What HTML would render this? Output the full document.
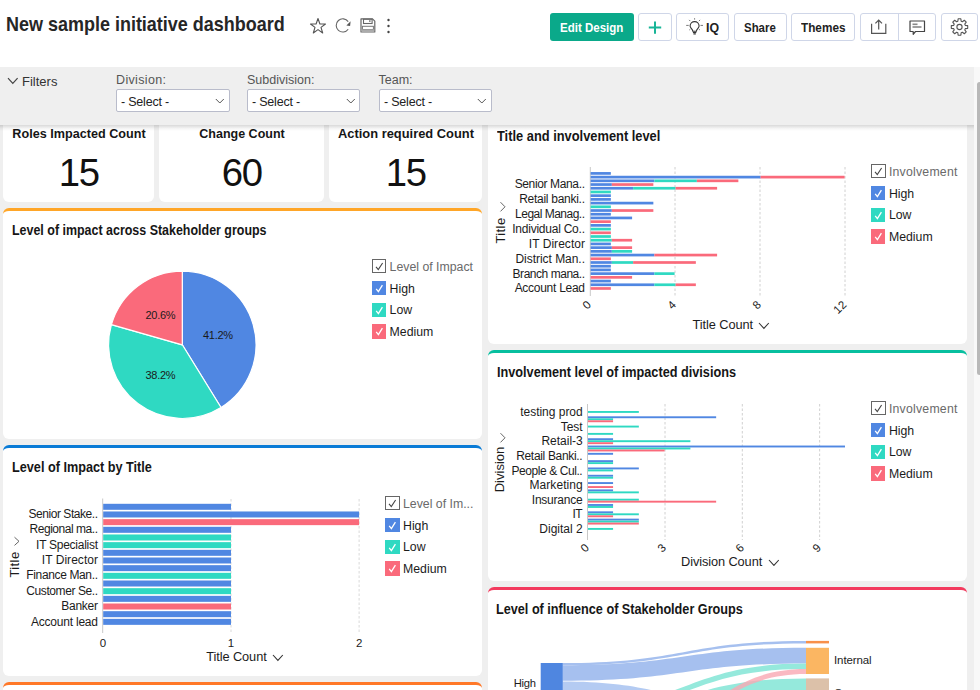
<!DOCTYPE html>
<html><head><meta charset="utf-8">
<style>
*{box-sizing:border-box;margin:0;padding:0}
html,body{width:980px;height:690px;overflow:hidden;background:#fff;font-family:"Liberation Sans",sans-serif;color:#222}
.a{position:absolute}
.t{position:absolute;white-space:nowrap;line-height:1}
#hdr{left:0;top:0;width:980px;height:67px;background:#fff}
#filt{left:0;top:67px;width:975px;height:58px;background:#efefef}
#content{left:0;top:125px;width:975px;height:565px;background:#efefef;overflow:hidden}
#sb{left:974px;top:67px;width:6px;height:623px;background:#f8f8f8}
#sbt{left:977px;top:82px;width:5px;height:293px;background:#b8b8b8;border-radius:3px}
.card{position:absolute;background:#fff;border-radius:6px;overflow:hidden}
.btn{position:absolute;top:13px;height:28px;border:1px solid #cfd6e8;border-radius:3px;background:#fff}
.sel{position:absolute;top:22px;height:22.5px;background:#fff;border:1px solid #b9bccb;border-radius:2px}
.ttl{font-weight:bold;font-size:13px;color:#111}
</style></head><body>
<div class="a" style="left:0;top:125px;width:975px;height:565px;background:#efefef"></div>
<div class="card" style="left:3px;top:113px;width:151px;height:89px;"></div>
<div class="card" style="left:159px;top:113px;width:165px;height:89px;"></div>
<div class="card" style="left:329px;top:113px;width:153px;height:89px;"></div>
<div class="card" style="left:3px;top:208px;width:479px;height:231px;border-top:3px solid #ffa628;"></div>
<div class="card" style="left:3px;top:445px;width:479px;height:231px;border-top:3px solid #0a7bd6;"></div>
<div class="card" style="left:3px;top:682px;width:479px;height:231px;border-top:3px solid #ff7828;"></div>
<div class="card" style="left:488px;top:113px;width:479px;height:231px;"></div>
<div class="card" style="left:488px;top:350px;width:479px;height:231px;border-top:3px solid #07bf9f;"></div>
<div class="card" style="left:488px;top:587px;width:479px;height:231px;border-top:3px solid #f33a5e;"></div>
<div class="t" style="left:-121.5px;width:400px;text-align:center;top:126.97px;font-size:13.5px;color:#161616;font-weight:bold;transform:scaleX(0.935);transform-origin:50% 0;">Roles Impacted Count</div>
<div class="t" style="left:-121.2px;width:400px;text-align:center;top:154.18px;font-size:38.3px;color:#111;letter-spacing:-1.3px;">15</div>
<div class="t" style="left:41.5px;width:400px;text-align:center;top:126.97px;font-size:13.5px;color:#161616;font-weight:bold;transform:scaleX(0.927);transform-origin:50% 0;">Change Count</div>
<div class="t" style="left:41.80000000000001px;width:400px;text-align:center;top:154.18px;font-size:38.3px;color:#111;letter-spacing:-1.3px;">60</div>
<div class="t" style="left:205.5px;width:400px;text-align:center;top:126.97px;font-size:13.5px;color:#161616;font-weight:bold;transform:scaleX(0.954);transform-origin:50% 0;">Action required Count</div>
<div class="t" style="left:205.8px;width:400px;text-align:center;top:154.18px;font-size:38.3px;color:#111;letter-spacing:-1.3px;">15</div>
<div class="t" style="left:12.3px;top:223.15px;font-size:14px;color:#161616;font-weight:bold;transform:scaleX(0.889);transform-origin:0 0;">Level of impact across Stakeholder groups</div>
<div class="t" style="left:11.6px;top:460.15px;font-size:14px;color:#161616;font-weight:bold;transform:scaleX(0.905);transform-origin:0 0;">Level of Impact by Title</div>
<div class="t" style="left:496.7px;top:128.55px;font-size:14px;color:#161616;font-weight:bold;transform:scaleX(0.918);transform-origin:0 0;">Title and involvement level</div>
<div class="t" style="left:496.9px;top:365.45px;font-size:14px;color:#161616;font-weight:bold;transform:scaleX(0.906);transform-origin:0 0;">Involvement level of impacted divisions</div>
<div class="t" style="left:496.3px;top:602.15px;font-size:14px;color:#161616;font-weight:bold;transform:scaleX(0.904);transform-origin:0 0;">Level of influence of Stakeholder Groups</div>
<svg class="a" style="left:0;top:0" width="490" height="690"><path d="M182.3 344.8 L182.30 271.10 A73.7 73.7 0 0 1 221.01 407.52 Z" fill="#5087e2" stroke="#fff" stroke-width="1.2" stroke-linejoin="round"/><path d="M182.3 344.8 L221.01 407.52 A73.7 73.7 0 0 1 111.40 324.68 Z" fill="#2fd9c2" stroke="#fff" stroke-width="1.2" stroke-linejoin="round"/><path d="M182.3 344.8 L111.40 324.68 A73.7 73.7 0 0 1 182.30 271.10 Z" fill="#fa6a7b" stroke="#fff" stroke-width="1.2" stroke-linejoin="round"/></svg>
<div class="t" style="left:145.5px;top:310.49px;font-size:11px;color:#1a1a1a;letter-spacing:-0.3px;">20.6%</div>
<div class="t" style="left:203px;top:330.49px;font-size:11px;color:#1a1a1a;letter-spacing:-0.3px;">41.2%</div>
<div class="t" style="left:145.5px;top:369.89px;font-size:11px;color:#1a1a1a;letter-spacing:-0.3px;">38.2%</div>
<div class="a" style="left:372px;top:259px;width:14.3px;height:14.3px;border:1px solid #666;background:#fff"></div>
<svg class="a" style="left:372px;top:259px" width="15" height="15"><path d="M4 7.8L6.3 10.6L10.6 4" fill="none" stroke="#444" stroke-width="1.1"/></svg>
<div class="t" style="left:389.6px;top:260.89px;font-size:12.3px;color:#6a6a6a;">Level of Impact</div>
<div class="a" style="left:372px;top:280.8px;width:14.2px;height:14.2px;background:#5087e2"></div>
<svg class="a" style="left:372px;top:280.8px" width="15" height="15"><path d="M4.2 7.8L6.4 10.6L10.4 4.2" fill="none" stroke="#fff" stroke-width="1.3"/></svg>
<div class="t" style="left:389.6px;top:282.59px;font-size:12.3px;color:#1c1c1c;">High</div>
<div class="a" style="left:372px;top:302.6px;width:14.2px;height:14.2px;background:#2fd9c2"></div>
<svg class="a" style="left:372px;top:302.6px" width="15" height="15"><path d="M4.2 7.8L6.4 10.6L10.4 4.2" fill="none" stroke="#fff" stroke-width="1.3"/></svg>
<div class="t" style="left:389.6px;top:304.39px;font-size:12.3px;color:#1c1c1c;">Low</div>
<div class="a" style="left:372px;top:324.4px;width:14.2px;height:14.2px;background:#fa6a7b"></div>
<svg class="a" style="left:372px;top:324.4px" width="15" height="15"><path d="M4.2 7.8L6.4 10.6L10.4 4.2" fill="none" stroke="#fff" stroke-width="1.3"/></svg>
<div class="t" style="left:389.6px;top:326.19px;font-size:12.3px;color:#1c1c1c;">Medium</div>
<svg class="a" style="left:0;top:0" width="490" height="690"><line x1="231.0" y1="499" x2="231.0" y2="633" stroke="#cfcfcf" stroke-width="0.8" stroke-dasharray="2.5 2"/><line x1="359.1" y1="499" x2="359.1" y2="633" stroke="#cfcfcf" stroke-width="0.8" stroke-dasharray="2.5 2"/><line x1="102.7" y1="498.5" x2="102.7" y2="633" stroke="#c8c8c8" stroke-width="1"/><rect x="103.2" y="503.80" width="127.80" height="6.0" fill="#5087e2"/><rect x="103.2" y="511.47" width="255.90" height="6.0" fill="#5087e2"/><rect x="103.2" y="519.14" width="255.90" height="6.0" fill="#fa6a7b"/><rect x="103.2" y="526.81" width="127.80" height="6.0" fill="#5087e2"/><rect x="103.2" y="534.48" width="127.80" height="6.0" fill="#2fd9c2"/><rect x="103.2" y="542.15" width="127.80" height="6.0" fill="#2fd9c2"/><rect x="103.2" y="549.82" width="127.80" height="6.0" fill="#5087e2"/><rect x="103.2" y="557.49" width="127.80" height="6.0" fill="#5087e2"/><rect x="103.2" y="565.16" width="127.80" height="6.0" fill="#5087e2"/><rect x="103.2" y="572.83" width="127.80" height="6.0" fill="#2fd9c2"/><rect x="103.2" y="580.50" width="127.80" height="6.0" fill="#5087e2"/><rect x="103.2" y="588.17" width="127.80" height="6.0" fill="#2fd9c2"/><rect x="103.2" y="595.84" width="127.80" height="6.0" fill="#5087e2"/><rect x="103.2" y="603.51" width="127.80" height="6.0" fill="#fa6a7b"/><rect x="103.2" y="611.18" width="127.80" height="6.0" fill="#5087e2"/><rect x="103.2" y="618.85" width="127.80" height="6.0" fill="#5087e2"/></svg>
<div class="t" style="right:882.45px;top:507.84px;font-size:12px;color:#1c1c1c;letter-spacing:-0.45px;">Senior Stake..</div>
<div class="t" style="right:882.462px;top:523.24px;font-size:12px;color:#1c1c1c;letter-spacing:-0.462px;">Regional ma..</div>
<div class="t" style="right:882.269px;top:538.64px;font-size:12px;color:#1c1c1c;letter-spacing:-0.269px;">IT Specialist</div>
<div class="t" style="right:881.955px;top:554.04px;font-size:12px;color:#1c1c1c;letter-spacing:0.045px;">IT Director</div>
<div class="t" style="right:882.362px;top:569.44px;font-size:12px;color:#1c1c1c;letter-spacing:-0.362px;">Finance Man..</div>
<div class="t" style="right:882.415px;top:584.84px;font-size:12px;color:#1c1c1c;letter-spacing:-0.415px;">Customer Se..</div>
<div class="t" style="right:882.25px;top:600.24px;font-size:12px;color:#1c1c1c;letter-spacing:-0.25px;">Banker</div>
<div class="t" style="right:882.208px;top:615.64px;font-size:12px;color:#1c1c1c;letter-spacing:-0.208px;">Account lead</div>
<div class="t" style="left:-97.1px;width:400px;text-align:center;top:637.57px;font-size:11.5px;color:#1c1c1c;">0</div>
<div class="t" style="left:31.0px;width:400px;text-align:center;top:637.57px;font-size:11.5px;color:#1c1c1c;">1</div>
<div class="t" style="left:159.10000000000002px;width:400px;text-align:center;top:637.57px;font-size:11.5px;color:#1c1c1c;">2</div>
<div class="t" style="left:206.3px;top:650.76px;font-size:12.8px;color:#1c1c1c;letter-spacing:-0.1px;">Title Count</div>
<svg class="a" style="left:272.3px;top:654.2px" width="11.8" height="7.4"><path d="M1 1L5.9 6.4L10.8 1" fill="none" stroke="#333" stroke-width="1.1"/></svg>
<div class="t" style="left:-6.3px;top:557.8px;width:40px;text-align:center;font-size:13px;letter-spacing:0.4px;color:#1c1c1c;transform:rotate(-90deg);transform-origin:50% 50%">Title</div>
<svg class="a" style="left:13px;top:536px" width="8" height="11"><path d="M1.5 1.2L6 5.3L1.5 9.4" fill="none" stroke="#666" stroke-width="1"/></svg>
<div class="a" style="left:385.4px;top:496px;width:14.3px;height:14.3px;border:1px solid #666;background:#fff"></div>
<svg class="a" style="left:385.4px;top:496px" width="15" height="15"><path d="M4 7.8L6.3 10.6L10.6 4" fill="none" stroke="#444" stroke-width="1.1"/></svg>
<div class="t" style="left:403.0px;top:497.89px;font-size:12.3px;color:#6a6a6a;">Level of Im...</div>
<div class="a" style="left:385.4px;top:517.8px;width:14.2px;height:14.2px;background:#5087e2"></div>
<svg class="a" style="left:385.4px;top:517.8px" width="15" height="15"><path d="M4.2 7.8L6.4 10.6L10.4 4.2" fill="none" stroke="#fff" stroke-width="1.3"/></svg>
<div class="t" style="left:403.0px;top:519.59px;font-size:12.3px;color:#1c1c1c;">High</div>
<div class="a" style="left:385.4px;top:539.6px;width:14.2px;height:14.2px;background:#2fd9c2"></div>
<svg class="a" style="left:385.4px;top:539.6px" width="15" height="15"><path d="M4.2 7.8L6.4 10.6L10.4 4.2" fill="none" stroke="#fff" stroke-width="1.3"/></svg>
<div class="t" style="left:403.0px;top:541.39px;font-size:12.3px;color:#1c1c1c;">Low</div>
<div class="a" style="left:385.4px;top:561.4px;width:14.2px;height:14.2px;background:#fa6a7b"></div>
<svg class="a" style="left:385.4px;top:561.4px" width="15" height="15"><path d="M4.2 7.8L6.4 10.6L10.4 4.2" fill="none" stroke="#fff" stroke-width="1.3"/></svg>
<div class="t" style="left:403.0px;top:563.19px;font-size:12.3px;color:#1c1c1c;">Medium</div>
<svg class="a" style="left:0;top:0" width="980" height="690"><line x1="675.0" y1="167" x2="675.0" y2="296" stroke="#c4c4c4" stroke-width="0.8" stroke-dasharray="2.5 2"/><line x1="760.0" y1="167" x2="760.0" y2="296" stroke="#c4c4c4" stroke-width="0.8" stroke-dasharray="2.5 2"/><line x1="845.0" y1="167" x2="845.0" y2="296" stroke="#c4c4c4" stroke-width="0.8" stroke-dasharray="2.5 2"/><line x1="590.3" y1="167" x2="590.3" y2="296" stroke="#c8c8c8" stroke-width="1"/><rect x="590.60" y="172.05" width="20.25" height="2.7" fill="#5087e2"/><rect x="590.60" y="175.76" width="170.00" height="2.7" fill="#5087e2"/><rect x="760.60" y="175.76" width="84.00" height="2.7" fill="#fa6a7b"/><rect x="590.60" y="179.47" width="63.75" height="2.7" fill="#5087e2"/><rect x="654.35" y="179.47" width="42.50" height="2.7" fill="#2fd9c2"/><rect x="696.85" y="179.47" width="41.50" height="2.7" fill="#fa6a7b"/><rect x="590.60" y="183.19" width="21.25" height="2.7" fill="#5087e2"/><rect x="611.85" y="183.19" width="41.50" height="2.7" fill="#fa6a7b"/><rect x="590.60" y="186.90" width="42.50" height="2.7" fill="#5087e2"/><rect x="633.10" y="186.90" width="42.50" height="2.7" fill="#2fd9c2"/><rect x="675.60" y="186.90" width="41.50" height="2.7" fill="#fa6a7b"/><rect x="590.60" y="190.61" width="20.25" height="2.7" fill="#2fd9c2"/><rect x="590.60" y="194.32" width="20.25" height="2.7" fill="#5087e2"/><rect x="590.60" y="198.03" width="20.25" height="2.7" fill="#5087e2"/><rect x="590.60" y="201.75" width="62.75" height="2.7" fill="#5087e2"/><rect x="590.60" y="205.46" width="20.25" height="2.7" fill="#2fd9c2"/><rect x="590.60" y="209.17" width="21.25" height="2.7" fill="#5087e2"/><rect x="611.85" y="209.17" width="41.50" height="2.7" fill="#fa6a7b"/><rect x="590.60" y="212.88" width="20.25" height="2.7" fill="#5087e2"/><rect x="590.60" y="216.59" width="41.50" height="2.7" fill="#5087e2"/><rect x="590.60" y="220.31" width="20.25" height="2.7" fill="#fa6a7b"/><rect x="590.60" y="224.02" width="20.25" height="2.7" fill="#5087e2"/><rect x="590.60" y="227.73" width="20.25" height="2.7" fill="#2fd9c2"/><rect x="590.60" y="231.44" width="20.25" height="2.7" fill="#fa6a7b"/><rect x="590.60" y="235.15" width="20.25" height="2.7" fill="#2fd9c2"/><rect x="590.60" y="238.87" width="21.25" height="2.7" fill="#2fd9c2"/><rect x="611.85" y="238.87" width="20.25" height="2.7" fill="#fa6a7b"/><rect x="590.60" y="242.58" width="20.25" height="2.7" fill="#5087e2"/><rect x="590.60" y="246.29" width="21.25" height="2.7" fill="#5087e2"/><rect x="611.85" y="246.29" width="20.25" height="2.7" fill="#fa6a7b"/><rect x="590.60" y="250.00" width="21.25" height="2.7" fill="#5087e2"/><rect x="611.85" y="250.00" width="20.25" height="2.7" fill="#2fd9c2"/><rect x="590.60" y="253.71" width="63.75" height="2.7" fill="#5087e2"/><rect x="654.35" y="253.71" width="62.75" height="2.7" fill="#fa6a7b"/><rect x="590.60" y="257.43" width="20.25" height="2.7" fill="#fa6a7b"/><rect x="590.60" y="261.14" width="21.25" height="2.7" fill="#5087e2"/><rect x="611.85" y="261.14" width="21.25" height="2.7" fill="#2fd9c2"/><rect x="633.10" y="261.14" width="62.75" height="2.7" fill="#fa6a7b"/><rect x="590.60" y="264.85" width="20.25" height="2.7" fill="#5087e2"/><rect x="590.60" y="268.56" width="20.25" height="2.7" fill="#5087e2"/><rect x="590.60" y="272.27" width="63.75" height="2.7" fill="#5087e2"/><rect x="654.35" y="272.27" width="20.25" height="2.7" fill="#2fd9c2"/><rect x="590.60" y="275.99" width="41.50" height="2.7" fill="#fa6a7b"/><rect x="590.60" y="279.70" width="20.25" height="2.7" fill="#5087e2"/><rect x="590.60" y="283.41" width="63.75" height="2.7" fill="#5087e2"/><rect x="654.35" y="283.41" width="21.25" height="2.7" fill="#2fd9c2"/><rect x="675.60" y="283.41" width="20.25" height="2.7" fill="#fa6a7b"/><rect x="590.60" y="287.12" width="20.25" height="2.7" fill="#fa6a7b"/></svg>
<div class="t" style="right:395.36199999999997px;top:178.34px;font-size:12px;color:#1c1c1c;letter-spacing:-0.362px;">Senior Mana..</div>
<div class="t" style="right:395.27099999999996px;top:193.20px;font-size:12px;color:#1c1c1c;letter-spacing:-0.271px;">Retail banki..</div>
<div class="t" style="right:395.50800000000004px;top:208.06px;font-size:12px;color:#1c1c1c;letter-spacing:-0.508px;">Legal Manag..</div>
<div class="t" style="right:395.23299999999995px;top:222.92px;font-size:12px;color:#1c1c1c;letter-spacing:-0.233px;">Individual Co..</div>
<div class="t" style="right:394.95500000000004px;top:237.78px;font-size:12px;color:#1c1c1c;letter-spacing:0.045px;">IT Director</div>
<div class="t" style="right:395.03599999999994px;top:252.64px;font-size:12px;color:#1c1c1c;letter-spacing:-0.036px;">District Man..</div>
<div class="t" style="right:395.46900000000005px;top:267.50px;font-size:12px;color:#1c1c1c;letter-spacing:-0.469px;">Branch mana..</div>
<div class="t" style="right:395.275px;top:282.36px;font-size:12px;color:#1c1c1c;letter-spacing:-0.275px;">Account Lead</div>
<div class="t" style="right:394.2px;top:298.6px;font-size:11.5px;color:#1c1c1c;transform:rotate(-45deg);transform-origin:100% 0%">0</div>
<div class="t" style="right:309.2px;top:298.6px;font-size:11.5px;color:#1c1c1c;transform:rotate(-45deg);transform-origin:100% 0%">4</div>
<div class="t" style="right:224.2px;top:298.6px;font-size:11.5px;color:#1c1c1c;transform:rotate(-45deg);transform-origin:100% 0%">8</div>
<div class="t" style="right:139.2px;top:298.6px;font-size:11.5px;color:#1c1c1c;transform:rotate(-45deg);transform-origin:100% 0%">12</div>
<div class="t" style="left:692.6px;top:319.46px;font-size:12.8px;color:#1c1c1c;letter-spacing:-0.1px;">Title Count</div>
<svg class="a" style="left:758.3px;top:322.2px" width="11.8" height="7.4"><path d="M1 1L5.9 6.4L10.8 1" fill="none" stroke="#333" stroke-width="1.1"/></svg>
<div class="t" style="left:480.3px;top:224px;width:40px;text-align:center;font-size:13px;letter-spacing:0.4px;color:#1c1c1c;transform:rotate(-90deg);transform-origin:50% 50%">Title</div>
<svg class="a" style="left:499px;top:201px" width="8" height="12"><path d="M1.5 1.2L6 5.8L1.5 10.4" fill="none" stroke="#666" stroke-width="1"/></svg>
<div class="a" style="left:871.3px;top:164px;width:14.3px;height:14.3px;border:1px solid #666;background:#fff"></div>
<svg class="a" style="left:871.3px;top:164px" width="15" height="15"><path d="M4 7.8L6.3 10.6L10.6 4" fill="none" stroke="#444" stroke-width="1.1"/></svg>
<div class="t" style="left:888.9px;top:165.89px;font-size:12.3px;color:#6a6a6a;letter-spacing:0.22px;">Involvement</div>
<div class="a" style="left:871.3px;top:185.8px;width:14.2px;height:14.2px;background:#5087e2"></div>
<svg class="a" style="left:871.3px;top:185.8px" width="15" height="15"><path d="M4.2 7.8L6.4 10.6L10.4 4.2" fill="none" stroke="#fff" stroke-width="1.3"/></svg>
<div class="t" style="left:888.9px;top:187.59px;font-size:12.3px;color:#1c1c1c;">High</div>
<div class="a" style="left:871.3px;top:207.6px;width:14.2px;height:14.2px;background:#2fd9c2"></div>
<svg class="a" style="left:871.3px;top:207.6px" width="15" height="15"><path d="M4.2 7.8L6.4 10.6L10.4 4.2" fill="none" stroke="#fff" stroke-width="1.3"/></svg>
<div class="t" style="left:888.9px;top:209.39px;font-size:12.3px;color:#1c1c1c;">Low</div>
<div class="a" style="left:871.3px;top:229.4px;width:14.2px;height:14.2px;background:#fa6a7b"></div>
<svg class="a" style="left:871.3px;top:229.4px" width="15" height="15"><path d="M4.2 7.8L6.4 10.6L10.4 4.2" fill="none" stroke="#fff" stroke-width="1.3"/></svg>
<div class="t" style="left:888.9px;top:231.19px;font-size:12.3px;color:#1c1c1c;">Medium</div>
<svg class="a" style="left:0;top:0" width="980" height="690"><line x1="665.01" y1="404" x2="665.01" y2="540" stroke="#c4c4c4" stroke-width="0.8" stroke-dasharray="2.5 2"/><line x1="742.32" y1="404" x2="742.32" y2="540" stroke="#c4c4c4" stroke-width="0.8" stroke-dasharray="2.5 2"/><line x1="819.6300000000001" y1="404" x2="819.6300000000001" y2="540" stroke="#c4c4c4" stroke-width="0.8" stroke-dasharray="2.5 2"/><line x1="587.5" y1="404" x2="587.5" y2="540" stroke="#c8c8c8" stroke-width="1"/><rect x="588.00" y="411.00" width="50.84" height="1.9" fill="#2fd9c2"/><rect x="588.00" y="416.31" width="128.15" height="1.9" fill="#5087e2"/><rect x="588.00" y="418.31" width="25.07" height="1.9" fill="#2fd9c2"/><rect x="588.00" y="420.31" width="25.07" height="1.9" fill="#fa6a7b"/><rect x="588.00" y="425.62" width="50.84" height="1.9" fill="#2fd9c2"/><rect x="588.00" y="432.93" width="25.07" height="1.9" fill="#2fd9c2"/><rect x="588.00" y="438.24" width="25.07" height="1.9" fill="#5087e2"/><rect x="588.00" y="440.24" width="102.38" height="1.9" fill="#2fd9c2"/><rect x="588.00" y="442.24" width="25.07" height="1.9" fill="#fa6a7b"/><rect x="588.00" y="445.55" width="257.00" height="1.9" fill="#5087e2"/><rect x="588.00" y="447.55" width="102.38" height="1.9" fill="#2fd9c2"/><rect x="588.00" y="449.55" width="76.61" height="1.9" fill="#fa6a7b"/><rect x="588.00" y="452.86" width="25.07" height="1.9" fill="#5087e2"/><rect x="588.00" y="460.17" width="25.07" height="1.9" fill="#5087e2"/><rect x="588.00" y="462.17" width="25.07" height="1.9" fill="#2fd9c2"/><rect x="588.00" y="467.48" width="50.84" height="1.9" fill="#5087e2"/><rect x="588.00" y="469.48" width="25.07" height="1.9" fill="#2fd9c2"/><rect x="588.00" y="474.79" width="25.07" height="1.9" fill="#5087e2"/><rect x="588.00" y="476.79" width="25.07" height="1.9" fill="#2fd9c2"/><rect x="588.00" y="482.10" width="25.07" height="1.9" fill="#5087e2"/><rect x="588.00" y="486.10" width="25.07" height="1.9" fill="#fa6a7b"/><rect x="588.00" y="489.41" width="25.07" height="1.9" fill="#5087e2"/><rect x="588.00" y="491.41" width="50.84" height="1.9" fill="#2fd9c2"/><rect x="588.00" y="498.72" width="50.84" height="1.9" fill="#2fd9c2"/><rect x="588.00" y="500.72" width="128.15" height="1.9" fill="#fa6a7b"/><rect x="588.00" y="504.03" width="25.07" height="1.9" fill="#5087e2"/><rect x="588.00" y="506.03" width="25.07" height="1.9" fill="#2fd9c2"/><rect x="588.00" y="511.34" width="25.07" height="1.9" fill="#5087e2"/><rect x="588.00" y="513.34" width="50.84" height="1.9" fill="#2fd9c2"/><rect x="588.00" y="515.34" width="25.07" height="1.9" fill="#fa6a7b"/><rect x="588.00" y="518.65" width="50.84" height="1.9" fill="#5087e2"/><rect x="588.00" y="520.65" width="50.84" height="1.9" fill="#2fd9c2"/><rect x="588.00" y="522.65" width="50.84" height="1.9" fill="#fa6a7b"/><rect x="588.00" y="527.96" width="25.07" height="1.9" fill="#2fd9c2"/></svg>
<div class="t" style="right:397.317px;top:406.14px;font-size:12px;color:#1c1c1c;letter-spacing:-0.017px;">testing prod</div>
<div class="t" style="right:397.29999999999995px;top:420.76px;font-size:12px;color:#1c1c1c;">Test</div>
<div class="t" style="right:397.3119999999999px;top:435.38px;font-size:12px;color:#1c1c1c;letter-spacing:-0.012px;">Retail-3</div>
<div class="t" style="right:397.621px;top:450.00px;font-size:12px;color:#1c1c1c;letter-spacing:-0.321px;">Retail Banki..</div>
<div class="t" style="right:397.71399999999994px;top:464.62px;font-size:12px;color:#1c1c1c;letter-spacing:-0.414px;">People &amp; Cul..</div>
<div class="t" style="right:397.23299999999995px;top:479.24px;font-size:12px;color:#1c1c1c;letter-spacing:0.067px;">Marketing</div>
<div class="t" style="right:397.52199999999993px;top:493.86px;font-size:12px;color:#1c1c1c;letter-spacing:-0.222px;">Insurance</div>
<div class="t" style="right:397.69999999999993px;top:508.48px;font-size:12px;color:#1c1c1c;letter-spacing:-0.4px;">IT</div>
<div class="t" style="right:397.29999999999995px;top:523.10px;font-size:12px;color:#1c1c1c;">Digital 2</div>
<div class="t" style="right:396.49999999999994px;top:542.2px;font-size:11.5px;color:#1c1c1c;transform:rotate(-45deg);transform-origin:100% 0%">0</div>
<div class="t" style="right:319.19px;top:542.2px;font-size:11.5px;color:#1c1c1c;transform:rotate(-45deg);transform-origin:100% 0%">3</div>
<div class="t" style="right:241.87999999999994px;top:542.2px;font-size:11.5px;color:#1c1c1c;transform:rotate(-45deg);transform-origin:100% 0%">6</div>
<div class="t" style="right:164.56999999999988px;top:542.2px;font-size:11.5px;color:#1c1c1c;transform:rotate(-45deg);transform-origin:100% 0%">9</div>
<div class="t" style="left:681px;top:556.36px;font-size:12.8px;color:#1c1c1c;letter-spacing:-0.1px;">Division Count</div>
<svg class="a" style="left:767.5px;top:559px" width="11.8" height="7.4"><path d="M1 1L5.9 6.4L10.8 1" fill="none" stroke="#333" stroke-width="1.1"/></svg>
<div class="t" style="left:468.8px;top:463px;width:60px;text-align:center;font-size:13px;color:#1c1c1c;transform:rotate(-90deg);transform-origin:50% 50%">Division</div>
<svg class="a" style="left:499px;top:432px" width="8" height="12"><path d="M1.5 1.2L6 5.8L1.5 10.4" fill="none" stroke="#666" stroke-width="1"/></svg>
<div class="a" style="left:871.3px;top:401px;width:14.3px;height:14.3px;border:1px solid #666;background:#fff"></div>
<svg class="a" style="left:871.3px;top:401px" width="15" height="15"><path d="M4 7.8L6.3 10.6L10.6 4" fill="none" stroke="#444" stroke-width="1.1"/></svg>
<div class="t" style="left:888.9px;top:402.89px;font-size:12.3px;color:#6a6a6a;letter-spacing:0.22px;">Involvement</div>
<div class="a" style="left:871.3px;top:422.8px;width:14.2px;height:14.2px;background:#5087e2"></div>
<svg class="a" style="left:871.3px;top:422.8px" width="15" height="15"><path d="M4.2 7.8L6.4 10.6L10.4 4.2" fill="none" stroke="#fff" stroke-width="1.3"/></svg>
<div class="t" style="left:888.9px;top:424.59px;font-size:12.3px;color:#1c1c1c;">High</div>
<div class="a" style="left:871.3px;top:444.6px;width:14.2px;height:14.2px;background:#2fd9c2"></div>
<svg class="a" style="left:871.3px;top:444.6px" width="15" height="15"><path d="M4.2 7.8L6.4 10.6L10.4 4.2" fill="none" stroke="#fff" stroke-width="1.3"/></svg>
<div class="t" style="left:888.9px;top:446.39px;font-size:12.3px;color:#1c1c1c;">Low</div>
<div class="a" style="left:871.3px;top:466.4px;width:14.2px;height:14.2px;background:#fa6a7b"></div>
<svg class="a" style="left:871.3px;top:466.4px" width="15" height="15"><path d="M4.2 7.8L6.4 10.6L10.4 4.2" fill="none" stroke="#fff" stroke-width="1.3"/></svg>
<div class="t" style="left:888.9px;top:468.19px;font-size:12.3px;color:#1c1c1c;">Medium</div>
<svg class="a" style="left:0;top:0" width="980" height="690"><path d="M562.8 663 C684.4 663 684.4 640.9 806 640.9 L806 643.4 C684.4 643.4 684.4 665.3 562.8 665.3 Z" fill="#a6c0ef" fill-opacity="1"/><path d="M562.8 665.3 C684.4 665.3 684.4 647.8 806 647.8 L806 663.5 C684.4 663.5 684.4 680.8 562.8 680.8 Z" fill="#a6c0ef" fill-opacity="1"/><path d="M562.8 681.5 C684.4 681.5 684.4 716 806 716 L806 735 C684.4 735 684.4 700 562.8 700 Z" fill="#b4cbf2" fill-opacity="1"/><path d="M562.8 709.5 C684.4 709.5 684.4 663.5 806 663.5 L806 669 C684.4 669 684.4 715 562.8 715 Z" fill="#95e9dc" fill-opacity="1"/><path d="M562.8 715 C684.4 715 684.4 678.4 806 678.4 L806 723 C684.4 723 684.4 760 562.8 760 Z" fill="#95e9dc" fill-opacity="1"/><path d="M562.8 790 C684.4 790 684.4 669 806 669 L806 674 C684.4 674 684.4 795 562.8 795 Z" fill="#f9a8b3" fill-opacity="0.8"/><rect x="540.7" y="663" width="22.1" height="40" fill="#4f86e0"/><rect x="806" y="640.9" width="23" height="2.5" fill="#f8904a"/><rect x="806" y="647.8" width="23" height="26.2" fill="#fbb662"/><rect x="806" y="678.4" width="23" height="30" fill="#dcc1a9"/></svg>
<div class="t" style="left:513.7px;top:677.72px;font-size:11.2px;color:#1c1c1c;letter-spacing:-0.2px;">High</div>
<div class="t" style="left:834px;top:655.27px;font-size:11.5px;color:#1c1c1c;letter-spacing:-0.1px;">Internal</div>
<div class="t" style="left:834.5px;top:687.77px;font-size:11.5px;color:#1c1c1c;letter-spacing:-0.1px;">Some</div>
<div class="a" style="left:0;top:125px;width:974px;height:6px;background:linear-gradient(rgba(0,0,0,0.15),rgba(0,0,0,0.04) 60%,rgba(0,0,0,0))"></div>
<div id="hdr" class="a">
  <div class="t" style="left:6.2px;top:14.4px;font-size:20.5px;font-weight:bold;color:#262626;transform:scaleX(0.877);transform-origin:0 0">New sample initiative dashboard</div>
  <svg class="a" style="left:308px;top:15px" width="90" height="20" viewBox="0 0 90 20">
    <polygon points="10,3.5 11.9,9 17.5,9 13,12.4 14.7,18 10,14.6 5.3,18 7,12.4 2.5,9 8.1,9" fill="none" stroke="#555" stroke-width="1.1" stroke-linejoin="round"/>
    <path d="M40.2 6.6 A6.6 6.6 0 1 0 40.2 14.2" fill="none" stroke="#666" stroke-width="1.1"/>
    <path d="M42.6 6.2 L38.4 10.6 L42.1 11 Z" fill="#555"/>
    <path d="M53 3.9 H64.5 L66.8 6.2 V17 H53 Z" fill="none" stroke="#666" stroke-width="1.2" stroke-linejoin="round"/>
    <rect x="55.5" y="4.2" width="8.6" height="4.3" fill="none" stroke="#666" stroke-width="1.1"/>
    <rect x="61.2" y="5.3" width="1.3" height="1.5" fill="#555"/>
    <rect x="54.4" y="11.3" width="11" height="3.2" fill="none" stroke="#777" stroke-width="1"/>
    <rect x="53.6" y="14.3" width="12.6" height="2.4" fill="#aaa"/>
    <circle cx="80.5" cy="5" r="1.2" fill="#444"/><circle cx="80.5" cy="11" r="1.2" fill="#444"/><circle cx="80.5" cy="17" r="1.2" fill="#444"/>
  </svg>
  <div class="a" style="left:550px;top:13px;width:84px;height:28px;background:#0aa98a;border-radius:3px"></div>
  <div class="t" style="left:560.2px;top:20.9px;font-size:13px;font-weight:bold;color:#fff;transform:scaleX(0.885);transform-origin:0 0">Edit Design</div>
  <div class="btn" style="left:638px;width:34px"></div>
  <svg class="a" style="left:648px;top:21px" width="14" height="14"><path d="M7 0.5V12.8M0.8 6.6H13.2" stroke="#18b597" stroke-width="2"/></svg>
  <div class="btn" style="left:676px;width:53px"></div>
  <svg class="a" style="left:685px;top:17px" width="19" height="19" viewBox="0 0 19 19">
    <path d="M7.8 14.3 C7.8 12.2 5.1 11.2 5.1 9.1 A4.5 4.5 0 0 1 14.1 9.1 C14.1 11.2 11.4 12.2 11.4 14.3 Z" fill="none" stroke="#333" stroke-width="1.1"/>
    <path d="M7.9 15.5H11.3M8.4 16.9H10.8" stroke="#333" stroke-width="1.1"/>
    <path d="M9.6 1.2V2.6M4.1 2.9L5.3 4.1M15.1 2.9L13.9 4.1M1.2 8.4H3.7M15.5 8.4H18M4.3 13L5.4 12M14.9 13L13.8 12" stroke="#777" stroke-width="1"/>
  </svg>
  <div class="t" style="left:705.6px;top:20.6px;font-size:13px;font-weight:bold;color:#222;transform:scaleX(0.95);transform-origin:0 0">IQ</div>
  <div class="btn" style="left:734px;width:53px"></div>
  <div class="t" style="left:744px;top:20.9px;font-size:13px;font-weight:bold;color:#222;transform:scaleX(0.88);transform-origin:0 0">Share</div>
  <div class="btn" style="left:791px;width:64px"></div>
  <div class="t" style="left:800.6px;top:20.9px;font-size:13px;font-weight:bold;color:#222;transform:scaleX(0.905);transform-origin:0 0">Themes</div>
  <div class="btn" style="left:860px;width:76px"></div>
  <div class="a" style="left:897.5px;top:13px;width:1px;height:28px;background:#cfd6e8"></div>
  <svg class="a" style="left:868px;top:17px" width="22" height="20" viewBox="0 0 22 20">
    <path d="M3.6 6.8V16.3H17.8V6.8" fill="none" stroke="#555" stroke-width="1.2"/>
    <path d="M10.7 12.5V3.2M7.4 6.3L10.7 3L14 6.3" fill="none" stroke="#555" stroke-width="1.2"/>
  </svg>
  <svg class="a" style="left:906px;top:17px" width="22" height="20" viewBox="0 0 22 20">
    <path d="M4 4H18.5V14.5H9.5L7.2 17.3V14.5H4Z" fill="none" stroke="#444" stroke-width="1.2" stroke-linejoin="round"/>
    <rect x="6.5" y="6.5" width="5" height="1.6" fill="#888"/><rect x="6.5" y="9.2" width="9" height="1.6" fill="#888"/>
  </svg>
  <div class="btn" style="left:941px;width:37px"></div>
  <svg class="a" style="left:949px;top:17px" width="21" height="21" viewBox="0 0 21 21">
    <path id="gear" fill="none" stroke="#555" stroke-width="1.1" stroke-linejoin="round" d="M8.83 4.24 L9.14 1.81 L11.86 1.81 L12.17 4.24 L13.39 4.74 L15.33 3.25 L17.25 5.17 L15.76 7.11 L16.26 8.33 L18.69 8.64 L18.69 11.36 L16.26 11.67 L15.76 12.89 L17.25 14.83 L15.33 16.75 L13.39 15.26 L12.17 15.76 L11.86 18.19 L9.14 18.19 L8.83 15.76 L7.61 15.26 L5.67 16.75 L3.75 14.83 L5.24 12.89 L4.74 11.67 L2.31 11.36 L2.31 8.64 L4.74 8.33 L5.24 7.11 L3.75 5.17 L5.67 3.25 L7.61 4.74Z"/>
    <circle cx="10.5" cy="10" r="2.6" fill="none" stroke="#555" stroke-width="1.1"/>
  </svg>
</div>
<div id="filt" class="a">
  <svg class="a" style="left:6.5px;top:10px" width="12" height="8"><path d="M1 1.2L5.8 6.4L10.6 1.2" fill="none" stroke="#444" stroke-width="1.2"/></svg>
  <div class="t" style="left:22px;top:8px;font-size:13px;color:#333">Filters</div>
  <div class="t" style="left:116px;top:6.5px;font-size:12.5px;color:#555;letter-spacing:0.35px">Division:</div>
  <div class="t" style="left:247px;top:6.5px;font-size:12.5px;color:#555">Subdivision:</div>
  <div class="t" style="left:378.5px;top:6.5px;font-size:12.5px;color:#555">Team:</div>
  <div class="sel" style="left:116px;width:113.6px"></div>
  <div class="sel" style="left:246.7px;width:113.8px"></div>
  <div class="sel" style="left:378.6px;width:113px"></div>
  <div class="t" style="left:121px;top:28.5px;font-size:12.5px;color:#222;letter-spacing:-0.2px">- Select -</div>
  <div class="t" style="left:252px;top:28.5px;font-size:12.5px;color:#222;letter-spacing:-0.2px">- Select -</div>
  <div class="t" style="left:384px;top:28.5px;font-size:12.5px;color:#222;letter-spacing:-0.2px">- Select -</div>
  <svg class="a" style="left:215px;top:30.5px" width="10" height="7"><path d="M0.8 1L4.8 5L8.8 1" fill="none" stroke="#555" stroke-width="1"/></svg>
  <svg class="a" style="left:346px;top:30.5px" width="10" height="7"><path d="M0.8 1L4.8 5L8.8 1" fill="none" stroke="#555" stroke-width="1"/></svg>
  <svg class="a" style="left:477px;top:30.5px" width="10" height="7"><path d="M0.8 1L4.8 5L8.8 1" fill="none" stroke="#555" stroke-width="1"/></svg>
</div>

<div id="sb" class="a"></div>
<div id="sbt" class="a"></div>
</body></html>
